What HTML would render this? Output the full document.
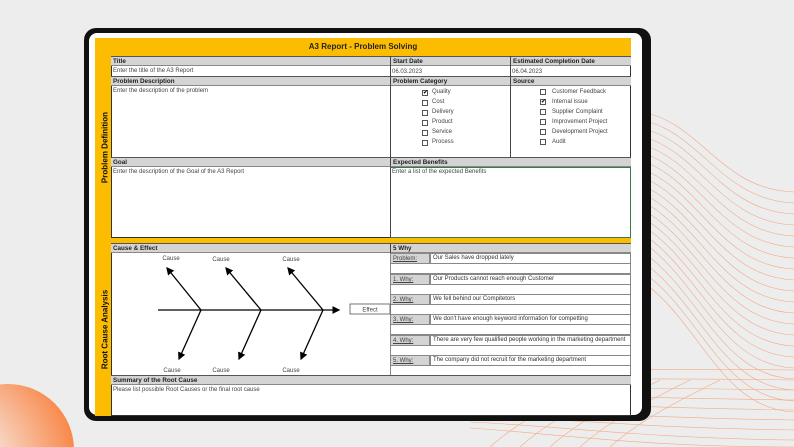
<!DOCTYPE html>
<html><head><meta charset="utf-8"><style>
*{margin:0;padding:0;box-sizing:border-box}
html,body{width:794px;height:447px;overflow:hidden}
body{background:#ededed;position:relative;font-family:"Liberation Sans",sans-serif;color:#333}
.a{position:absolute}
.h{position:absolute;background:#d4d4d4;font-weight:bold;font-size:6.3px;padding-left:2px;line-height:9px;border-top:1px solid #555;border-bottom:1px solid #888;color:#222}
.t{position:absolute;font-size:6px;padding-left:2px;color:#444;line-height:8px}
.cb{position:absolute;width:6px;height:6px;border:1px solid #555;background:#fff;font-size:6px;line-height:5px;text-align:center;color:#000}
.lb{position:absolute;font-size:6px;color:#444;line-height:7px}
.vl{position:absolute;background:#444;width:1px}
.wl{position:absolute;left:390px;width:40px;height:11px;background:#d4d4d4;border:1px solid #888;font-size:6px;line-height:11px;padding-left:2px;text-decoration:underline;color:#444}
.wt{position:absolute;left:430px;width:201px;height:11px;border:1px solid #888;font-size:6px;line-height:9px;padding-left:2px;color:#333;background:#fff;overflow:hidden;white-space:nowrap}
.side{position:absolute;font-weight:bold;font-size:8px;color:#111;transform:rotate(-90deg);white-space:nowrap;transform-origin:center}
</style></head><body>
<svg class="a" style="left:0;top:0" width="794" height="447">
<defs><radialGradient id="g" cx="0.1" cy="0.6" r="0.9"><stop offset="0.3" stop-color="#f6e3d8"/><stop offset="1" stop-color="#f98a4d"/></radialGradient></defs>
<circle cx="8" cy="450" r="66" fill="url(#g)"/>
<g fill="none" stroke="#f4a37a" stroke-width="0.6" opacity="0.9">
<path d="M640,112 C700,120 720,190 794,192"/>
<path d="M640,120 C700,130 720,200 794,203"/>
<path d="M640,128 C700,140 720,211 794,214"/>
<path d="M640,136 C700,150 720,222 794,225"/>
<path d="M640,144 C700,160 720,233 794,236"/>
<path d="M640,152 C700,170 720,244 794,247"/>
<path d="M640,160 C700,180 720,255 794,258"/>
<path d="M640,168 C700,190 720,266 794,269"/>
<path d="M640,176 C700,200 720,277 794,280"/>
<path d="M640,184 C700,210 720,288 794,291"/>
<path d="M640,192 C700,220 720,299 794,302"/>
<path d="M640,200 C700,230 720,310 794,313"/>
<path d="M640,208 C700,240 720,321 794,324"/>
<path d="M640,216 C700,250 720,332 794,335"/>
<path d="M640,224 C700,260 720,343 794,346"/>
<path d="M640,232 C700,270 720,354 794,357"/>
<path d="M640,240 C700,280 720,365 794,368"/>
<path d="M640,250 C700,290 720,376 794,379"/>
<path d="M640,260 C700,300 720,387 794,390"/>
<path d="M640,270 C700,310 720,398 794,401"/>
<path d="M640,280 C700,320 720,409 794,412"/>
<path d="M470,380 C560,370 640,368 794,370"/>
<path d="M470,386 C560,378 640,378 794,380"/>
<path d="M470,392 C560,386 640,388 794,390"/>
<path d="M470,398 C560,394 640,398 794,400"/>
<path d="M470,404 C560,402 640,408 794,410"/>
<path d="M470,410 C560,410 640,418 794,420"/>
<path d="M470,416 C560,418 640,428 794,430"/>
<path d="M470,422 C560,426 640,438 794,440"/>
<path d="M470,428 C560,434 640,447 794,447"/>
<path d="M490,447 C520,420 560,400 600,380"/>
<path d="M520,447 C550,420 590,400 630,380"/>
<path d="M550,447 C580,420 620,400 660,380"/>
<path d="M580,447 C610,420 650,400 690,380"/>
<path d="M610,447 C640,420 680,400 720,380"/>
</g>
</svg>
<div class="a" style="left:84px;top:28px;width:567px;height:393px;background:#111;border-radius:12px"></div>
<div class="a" style="left:89px;top:33px;width:553px;height:382px;background:#fff;border-radius:8px"></div>
<div class="a" style="left:95px;top:38px;width:536px;height:378px;background:#fcbd00"></div>
<div class="a" style="left:95px;top:38px;width:536px;height:18px;font-weight:bold;font-size:8px;line-height:18px;text-align:center;color:#222">A3 Report - Problem Solving</div>
<div class="a" style="left:111px;top:56px;width:520px;height:182px;background:#fff;border:1px solid #333"></div>
<div class="a" style="left:111px;top:243px;width:520px;height:173px;background:#fff;border:1px solid #333"></div>
<div class="side" style="left:55px;top:143px;width:100px;text-align:center">Problem Definition</div>
<div class="side" style="left:45px;top:325px;width:120px;text-align:center">Root Cause Analysis</div>
<div class="h" style="left:111px;top:56px;width:520px;height:10px">Title</div>
<div class="h" style="left:390px;top:56px;width:120px;height:10px;border-left:1px solid #444">Start Date</div>
<div class="h" style="left:510px;top:56px;width:121px;height:10px;border-left:1px solid #444">Estimated Completion Date</div>
<div class="t" style="left:111px;top:67px">Enter the title of the A3 Report</div>
<div class="t" style="left:390px;top:68px">06.03.2023</div>
<div class="t" style="left:510px;top:68px">06.04.2023</div>
<div class="h" style="left:111px;top:76px;width:520px;height:10px">Problem Description</div>
<div class="h" style="left:390px;top:76px;width:120px;height:10px;border-left:1px solid #444">Problem Category</div>
<div class="h" style="left:510px;top:76px;width:121px;height:10px;border-left:1px solid #444">Source</div>
<div class="vl" style="left:390px;top:56px;height:182px"></div>
<div class="vl" style="left:510px;top:56px;height:101px"></div>
<div class="t" style="left:111px;top:87px">Enter the description of the problem</div>
<div class="cb" style="left:422px;top:90px">✔</div><div class="lb" style="left:432px;top:89px">Quality</div>
<div class="cb" style="left:422px;top:100px"></div><div class="lb" style="left:432px;top:99px">Cost</div>
<div class="cb" style="left:422px;top:110px"></div><div class="lb" style="left:432px;top:109px">Delivery</div>
<div class="cb" style="left:422px;top:120px"></div><div class="lb" style="left:432px;top:119px">Product</div>
<div class="cb" style="left:422px;top:130px"></div><div class="lb" style="left:432px;top:129px">Service</div>
<div class="cb" style="left:422px;top:140px"></div><div class="lb" style="left:432px;top:139px">Process</div>
<div class="cb" style="left:540px;top:89px"></div><div class="lb" style="left:552px;top:89px">Customer Feedback</div>
<div class="cb" style="left:540px;top:99px">✔</div><div class="lb" style="left:552px;top:99px">Internal issue</div>
<div class="cb" style="left:540px;top:109px"></div><div class="lb" style="left:552px;top:109px">Supplier Complaint</div>
<div class="cb" style="left:540px;top:119px"></div><div class="lb" style="left:552px;top:119px">Improvement Project</div>
<div class="cb" style="left:540px;top:129px"></div><div class="lb" style="left:552px;top:129px">Development Project</div>
<div class="cb" style="left:540px;top:139px"></div><div class="lb" style="left:552px;top:139px">Audit</div>
<div class="h" style="left:111px;top:157px;width:520px;height:10px">Goal</div>
<div class="h" style="left:390px;top:157px;width:241px;height:10px;border-left:1px solid #444">Expected Benefits</div>
<div class="t" style="left:111px;top:168px">Enter the description of the Goal of the A3 Report</div>
<div class="a" style="left:390px;top:167px;width:241px;height:71px;border:1px solid #3a7a4a;border-left:1px solid #444"></div>
<div class="t" style="left:390px;top:168px">Enter a list of the expected Benefits</div>
<div class="h" style="left:111px;top:243px;width:520px;height:10px">Cause &amp; Effect</div>
<div class="h" style="left:390px;top:243px;width:241px;height:10px;border-left:1px solid #444">5 Why</div>
<div class="vl" style="left:390px;top:243px;height:133px"></div>
<div class="wl" style="top:253px">Problem:</div><div class="wt" style="top:253px">Our Sales have dropped lately</div>
<div class="wt" style="top:263px;left:390px;width:241px"></div>
<div class="wl" style="top:274px">1. Why:</div><div class="wt" style="top:274px">Our Products cannot reach enough Customer</div>
<div class="wt" style="top:284px;left:390px;width:241px"></div>
<div class="wl" style="top:294px">2. Why:</div><div class="wt" style="top:294px">We fell behind our Compitetors</div>
<div class="wt" style="top:304px;left:390px;width:241px"></div>
<div class="wl" style="top:314px">3. Why:</div><div class="wt" style="top:314px">We don't have enough keyword information for competting</div>
<div class="wt" style="top:324px;left:390px;width:241px"></div>
<div class="wl" style="top:335px">4. Why:</div><div class="wt" style="top:335px">There are very few qualified people working in the marketing department</div>
<div class="wt" style="top:345px;left:390px;width:241px"></div>
<div class="wl" style="top:355px">5. Why:</div><div class="wt" style="top:355px">The company did not recruit for the marketing department</div>
<div class="wt" style="top:365px;left:390px;width:241px"></div>
<svg class="a" style="left:111px;top:253px" width="280" height="122">
<defs><marker id="m" markerWidth="6" markerHeight="6" refX="5" refY="3" orient="auto"><path d="M0,0 L6,3 L0,6z" fill="#000"/></marker></defs>
<g stroke="#000" stroke-width="1.3" fill="none">
<line x1="47" y1="57" x2="228" y2="57" marker-end="url(#m)"/>
<line x1="90" y1="57" x2="56" y2="15" marker-end="url(#m)"/>
<line x1="150" y1="57" x2="115" y2="15" marker-end="url(#m)"/>
<line x1="212" y1="57" x2="177" y2="15" marker-end="url(#m)"/>
<line x1="90" y1="57" x2="68" y2="106" marker-end="url(#m)"/>
<line x1="150" y1="57" x2="128" y2="106" marker-end="url(#m)"/>
<line x1="212" y1="57" x2="190" y2="106" marker-end="url(#m)"/>
</g>
<g font-size="6" fill="#444" font-family="Liberation Sans" text-anchor="middle">
<text x="60" y="7">Cause</text><text x="110" y="8">Cause</text><text x="180" y="8">Cause</text>
<text x="61" y="119">Cause</text><text x="110" y="119">Cause</text><text x="180" y="119">Cause</text>
</g>
<rect x="239" y="51" width="40" height="10" fill="#fff" stroke="#555" stroke-width="0.8"/>
<text x="259" y="58.5" font-size="6" fill="#444" font-family="Liberation Sans" text-anchor="middle">Effect</text>
</svg>
<div class="h" style="left:111px;top:375px;width:520px;height:10px">Summary of the Root Cause</div>
<div class="t" style="left:111px;top:386px">Please list possible Root Causes or the final root cause</div>
</body></html>
